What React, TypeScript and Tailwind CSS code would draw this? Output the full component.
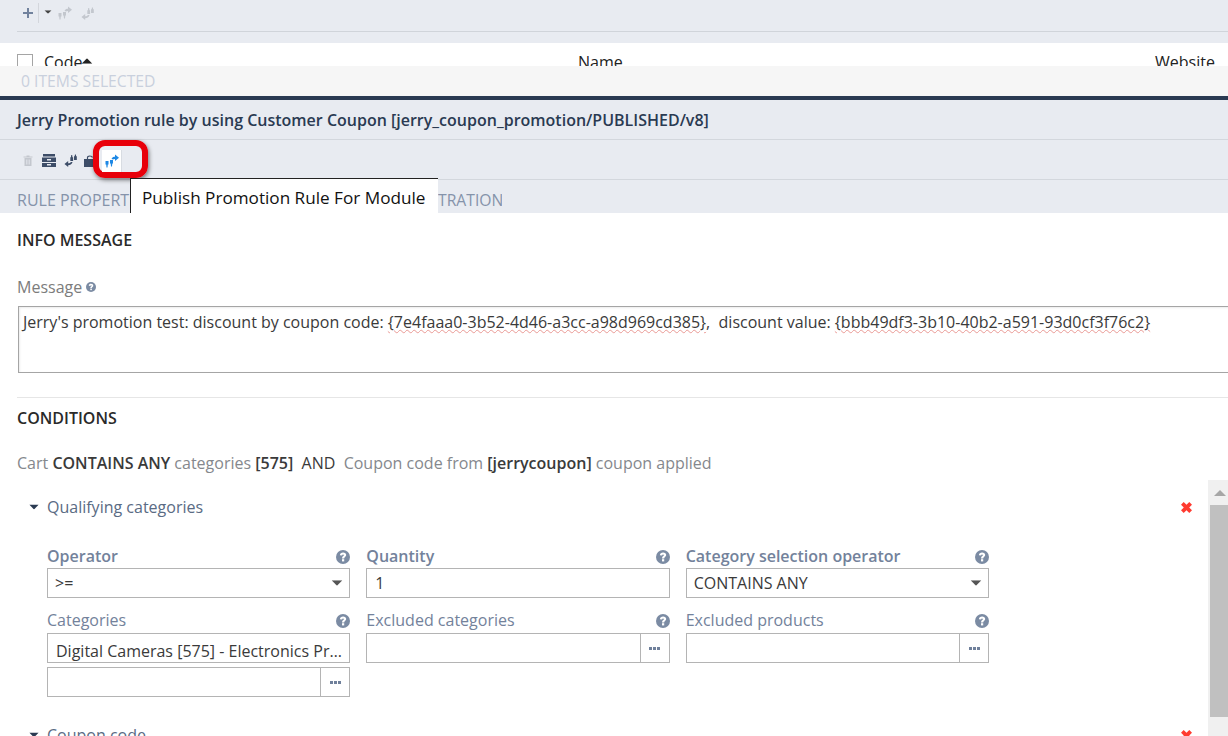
import React from "react";

const font = { fontFamily: '"Open Sans", "Noto Sans", sans-serif' };

function Help({ small }: { small?: boolean }) {
  const s = small ? 10 : 14;
  return (
    <svg width={s} height={s} viewBox="0 0 14 14" className="shrink-0">
      <circle cx="7" cy="7" r="7" fill="#7b8ba3" />
      <path d="M3.9 5.3C4 3.4 5.3 2.5 7.1 2.5C8.9 2.5 10.2 3.6 10.2 5.1C10.2 7 8.2 7 8.2 8.4H6C6 6.2 7.9 6.2 7.9 5.3C7.9 4.9 7.6 4.6 7 4.6C6.5 4.6 6.2 4.9 6.1 5.5Z" fill="#fff" />
      <rect x="6" y="9.2" width="2.2" height="2.2" fill="#fff" />
    </svg>
  );
}

function Caret({ className }: { className?: string }) {
  return (
    <svg width="12" height="6" viewBox="0 0 12 6" className={className}>
      <path d="M0 0H12L6 6Z" fill="currentColor" />
    </svg>
  );
}

function SyncUp({ color, size = 14 }: { color: string; size?: number }) {
  return (
    <svg width={size} height={size} viewBox="0 0 14 14">
      <path d="M0.5 7H3.5V10.5H2.8L2.5 13.5H1.5L1.2 10.5H0.5Z" fill={color} />
      <path d="M5 6H8V9.5H7.3L7 12.5H6L5.7 9.5H5Z" fill={color} />
      <path d="M6.5 4.5C7.5 3.2 8.8 2.8 10 2.8V0.5L14 3.8L10 7V5C9 5 8.4 5.2 7.8 5.6Z" fill={color} />
    </svg>
  );
}

function SyncDown({ color, size = 14 }: { color: string; size?: number }) {
  return (
    <svg width={size} height={size} viewBox="0 0 14 14">
      <path d="M7.5 3.5L7.8 1H8.8L9.1 3.5H9.8V7.5H6.8V3.5Z" fill={color} />
      <path d="M11.5 2.5L11.8 0.5H12.8L13.1 2.5H13.8V6.5H10.8V2.5Z" fill={color} />
      <path d="M7.5 8.5C7 9.5 5.8 10 4.5 10V7.5L0.5 10.8L4.5 14V12C6.5 12 8.5 10.8 9.2 8.5Z" fill={color} />
    </svg>
  );
}

function Dots() {
  return (
    <span className="flex gap-[1px]">
      <span className="w-[3px] h-[3px] bg-[#6f809b]" />
      <span className="w-[3px] h-[3px] bg-[#6f809b]" />
      <span className="w-[3px] h-[3px] bg-[#6f809b]" />
    </span>
  );
}

function Label({ text, strong }: { text: string; strong?: boolean }) {
  return (
    <div className={`flex items-center justify-between h-[17px] ${strong ? "mb-[3px]" : "mb-[4px]"}`}>
      <span className={`text-[16px] leading-[17px] text-[#73829b] ${strong ? "font-semibold" : ""}`}>{text}</span>
      <Help />
    </div>
  );
}

function Picker({ value }: { value?: string }) {
  return (
    <div className="flex h-[30px] border border-[#b4b4b4] bg-white">
      <div className="flex-1 min-w-0 px-2 text-[16px] leading-[28px] text-[#3a3a3a]">{value}</div>
      <div className="w-[29px] border-l border-[#b4b4b4] flex items-center justify-center">
        <Dots />
      </div>
    </div>
  );
}

function SelectBox({ value }: { value: string }) {
  return (
    <div className="flex items-center justify-between h-[30px] border border-[#b4b4b4] bg-white pl-[7px] pr-[6px]">
      <span className="text-[16px] text-[#3a3a3a]">{value}</span>
      <Caret className="text-[#555] scale-90" />
    </div>
  );
}

function Remove() {
  return (
    <svg width="11" height="11" viewBox="0 0 11 11" className="text-[#ff3b30]">
      <path d="M2.7 0L5.5 2.8L8.3 0L11 2.7L8.2 5.5L11 8.3L8.3 11L5.5 8.2L2.7 11L0 8.3L2.8 5.5L0 2.7Z" fill="currentColor" />
    </svg>
  );
}

const Squiggle = ({ children }: { children: React.ReactNode }) => (
  <span className="underline decoration-wavy decoration-[#ea9a95] decoration-[1px] underline-offset-1">{children}</span>
);

export default function App() {
  return (
    <div className="relative w-[1228px] h-[736px] overflow-hidden bg-white" style={font}>
      {/* Upper grid */}
      <div className="h-[43px] bg-[#e8ebf1] pl-[17px]">
        <div className="h-[32px] border-b border-[#d0d4da] flex items-start pt-[2px] pl-[6px]">
          <div className="flex items-center h-[22px]">
            <svg width="10" height="10" viewBox="0 0 10 10">
              <path d="M4 0H6V4H10V6H6V10H4V6H0V4H4Z" fill="#71829d" />
            </svg>
            <span className="ml-[5px] h-[20px] border-l border-[#d3d6dc]" />
            <Caret className="ml-[3px] text-[#444] scale-[0.6] -mt-[3px]" />
            <span className="ml-[4px] flex"><SyncUp color="#c3c7ce" /></span>
            <span className="ml-[9px] flex"><SyncDown color="#c3c7ce" size={13} /></span>
          </div>
        </div>
      </div>
      <div className="h-[23px] overflow-hidden bg-white relative flex text-[16px] leading-[22px] text-[#222]">
        <div className="pl-[17px] pt-[11px] flex">
          <span className="block w-[16px] h-[16px] border border-[#a5a5a5] bg-white" />
          <span className="ml-[11px] leading-[22px] mt-[-3px]">Code</span>
          <Caret className="mt-[4px] ml-[-1px] scale-90 rotate-180 text-[#222]" />
        </div>
        <div className="absolute left-[578px] top-[8px]">Name</div>
        <div className="absolute left-[1155px] top-[8px]">Website</div>
      </div>
      <div className="h-[30px] bg-[#f6f6f6] pl-[21px] text-[15.7px] leading-[30px] text-[#c9d0dd]">0 ITEMS SELECTED</div>

      {/* Detail panel */}
      <div className="border-t-[4px] border-[#2a3a52]">
        <div className="h-[40px] bg-[#e8ebf1] pl-[17px] border-b border-[#d3d7dd] text-[16px] font-semibold leading-[40px] text-[#2a3a52]">
          Jerry Promotion rule by using Customer Coupon [jerry_coupon_promotion/PUBLISHED/v8]
        </div>
        <div className="h-[40px] bg-[#e8ebf1] border-b border-[#d3d7dd] pl-[23px] pt-[2px] flex items-center">
          <svg width="10" height="11" viewBox="0 0 10 11">
            <path d="M1.5 3H8.5V11H1.5ZM0.5 1.5H3.5V0.5H6.5V1.5H9.5V2.5H0.5Z" fill="#c3c7ce" />
            <path d="M3.5 4.5V9.5M5 4.5V9.5M6.5 4.5V9.5" stroke="#e8ebf1" strokeWidth="0.6" />
          </svg>
          <svg width="14" height="13" viewBox="0 0 14 13" className="ml-[9px]">
            <path d="M1 0H13V2.5H1ZM0 3.5H14V8H0ZM0 9H14V13H0Z" fill="#3d4d68" />
            <path d="M5 5H9V6.5H5ZM5 10H9V11.5H5Z" fill="#e8ebf1" />
          </svg>
          <span className="ml-[8px] flex"><SyncDown color="#3d4d68" size={13} /></span>
          <svg width="12" height="12" viewBox="0 0 12 12" className="ml-[7px]">
            <rect x="0" y="4" width="12" height="8" fill="#3d4d68" />
            <path d="M3.5 4V2.5C3.5 0.5 8 0.5 8.5 2.5" fill="none" stroke="#3d4d68" strokeWidth="1.2" />
          </svg>
        </div>
        <div className="relative h-[33px] bg-[#e8ebf1] pl-[17px] pt-[8px] text-[16px] leading-[24px] text-[#8593aa]">
          <span>RULE PROPERTIES</span>
          <span className="absolute left-[438px] top-[8px] w-[64px] overflow-hidden whitespace-nowrap text-[15.7px]">TRATION</span>
        </div>

        {/* Content */}
        <div className="pl-[17px] pt-[16px]">
          <h2 className="text-[16px] font-semibold leading-[22px] text-[#2a2a2a]">INFO MESSAGE</h2>
          <div className="mt-[25px] flex items-center gap-[4px] text-[16px] leading-[22px] text-[#7c7c7c]">
            Message <Help small />
          </div>
          <div className="mt-[8px] ml-[1px] h-[67px] border border-[#a5a5a5] pl-[4px] pt-[3px] text-[16px] leading-[24px] text-[#3a3a3a] whitespace-nowrap overflow-hidden w-[1220px] shadow-[inset_1px_1px_2px_rgba(0,0,0,0.08)]">
            Jerry's promotion test: discount by coupon code: <Squiggle>{"{7e4faaa0-3b52-4d46-a3cc-a98d969cd385}"}</Squiggle>,&nbsp; discount value: <Squiggle>{"{bbb49df3-3b10-40b2-a591-93d0cf3f76c2}"}</Squiggle>
          </div>
          <div className="mt-[24px] border-t border-[#e6e6e6]" />
          <h2 className="mt-[9px] text-[16px] font-semibold leading-[22px] text-[#2a2a2a]">CONDITIONS</h2>
          <div className="mt-[23px] text-[16px] leading-[22px] text-[#85888d] whitespace-nowrap">
            Cart <b className="font-semibold text-[#3a3a3a]">CONTAINS ANY</b> categories <b className="font-semibold text-[#3a3a3a]">[575]</b>&nbsp; <span className="text-[#3a3a3a]">AND</span>&nbsp; Coupon code from <b className="font-semibold text-[#3a3a3a]">[jerrycoupon]</b> coupon applied
          </div>
        </div>

        {/* Scroll region */}
        <div className="flex h-[256px] mt-[6px] overflow-hidden">
          <div className="flex-1 min-w-0 pl-[28px] pr-[16px] pt-[16px]">
            <div className="flex items-center justify-between h-[22px]">
              <div className="flex items-center gap-[7px] text-[16px] text-[#5a6b84]">
                <Caret className="scale-[0.8] text-[#2a3a52]" />
                Qualifying categories
              </div>
              <Remove />
            </div>
            <div className="pl-[19px] pt-[30px]">
              <div className="grid grid-cols-3 gap-x-[16px] w-[942px]">
                <div>
                  <Label text="Operator" strong />
                  <SelectBox value=">=" />
                </div>
                <div>
                  <Label text="Quantity" strong />
                  <div className="h-[30px] border border-[#b4b4b4] px-2 text-[16px] leading-[28px] text-[#3a3a3a]">1</div>
                </div>
                <div>
                  <Label text="Category selection operator" strong />
                  <SelectBox value="CONTAINS ANY" />
                </div>
                <div className="mt-[14px]">
                  <Label text="Categories" />
                  <div className="h-[30px] border border-[#b4b4b4] pl-2 pr-[4px] text-[16px] leading-[34px] text-[#3a3a3a] whitespace-nowrap overflow-hidden text-ellipsis">
                    Digital Cameras [575] - Electronics Products
                  </div>
                  <div className="mt-[4px]"><Picker /></div>
                </div>
                <div className="mt-[14px]">
                  <Label text="Excluded categories" />
                  <Picker />
                </div>
                <div className="mt-[14px]">
                  <Label text="Excluded products" />
                  <Picker />
                </div>
              </div>
            </div>
            <div className="mt-[27px] flex items-center justify-between h-[22px]">
              <div className="flex items-center gap-[7px] text-[16px] text-[#5a6b84]">
                <Caret className="scale-[0.8] text-[#2a3a52]" />
                Coupon code
              </div>
              <Remove />
            </div>
          </div>
          <div className="w-[20px] bg-[#f0f0f0] flex flex-col items-center">
            <div className="h-[25px] flex items-center justify-center pl-[3px]">
              <Caret className="rotate-180 text-[#a6a6a6]" />
            </div>
            <div className="h-[212px] w-[18px] ml-[2px] bg-[#c0c0c0]" />
          </div>
        </div>
      </div>

      {/* Active toolbar button */}
      <div className="absolute left-[93px] top-[140px] w-[55px] h-[38px] rounded-[12px] border-[6px] border-[#e8000a] shadow-[1px_2px_4px_rgba(0,0,0,0.5)]">
        <div className="ml-[3px] mt-[4px] w-[20px] h-[22px] bg-white border-r border-[#d8dce2] flex items-center justify-center">
          <SyncUp color="#1e88e5" />
        </div>
      </div>

      {/* Tooltip */}
      <div className="absolute left-[130px] top-[178px] w-[308px] h-[35px] bg-white border-l border-t border-[#222] pl-[11px] text-[17.15px] leading-[37px] text-[#111] whitespace-nowrap">
        Publish Promotion Rule For Module
      </div>
    </div>
  );
}
